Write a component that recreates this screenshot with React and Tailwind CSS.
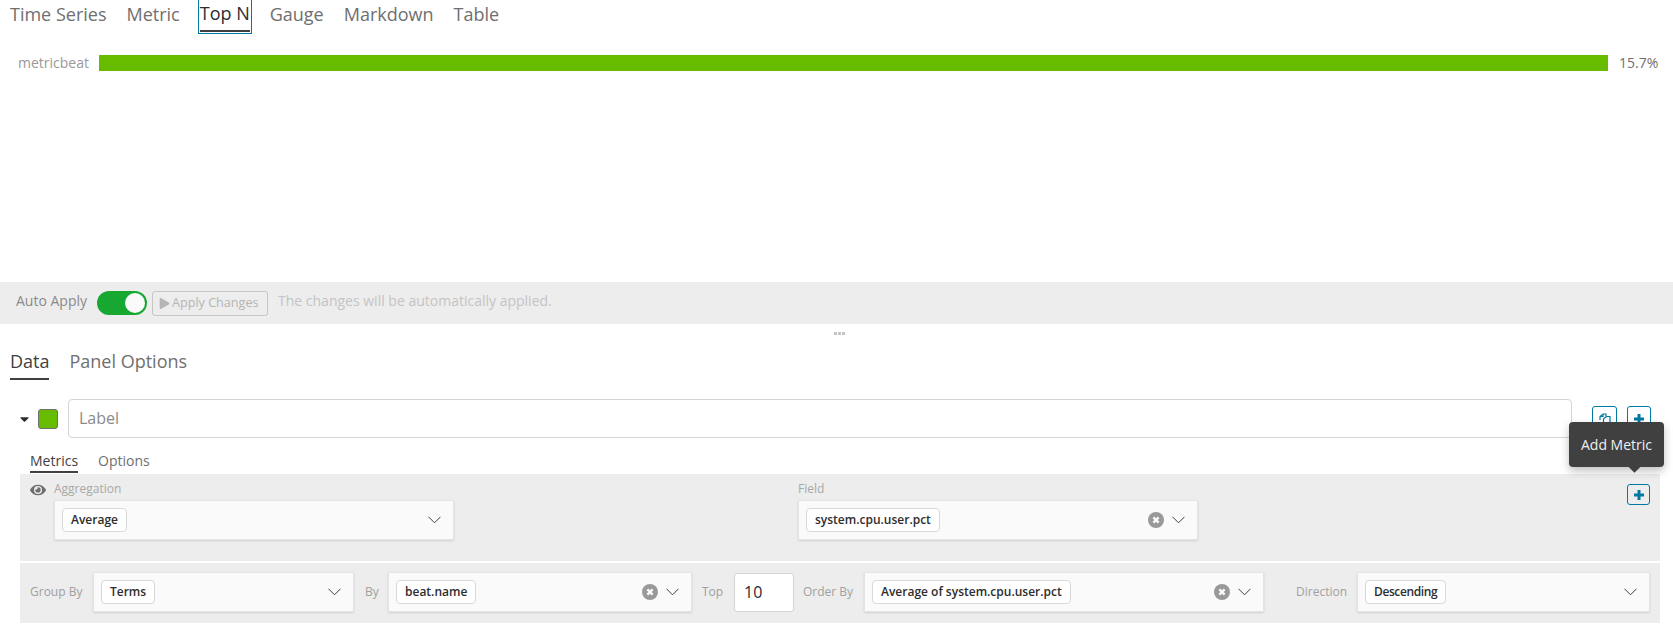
import { FaCaretDown, FaEye, FaPlay } from "react-icons/fa";

const TABS = ["Time Series", "Metric", "Top N", "Gauge", "Markdown", "Table"];

function Chevron() {
  return (
    <svg width="13" height="8" viewBox="0 0 13 8" className="shrink-0">
      <path d="M0.5 0.8 L6.5 6.8 L12.5 0.8" fill="none" stroke="#3f3f3f" strokeWidth="1" />
    </svg>
  );
}

function ClearIcon() {
  return (
    <svg width="16" height="16" viewBox="0 0 16 16" className="shrink-0">
      <circle cx="8" cy="8" r="8" fill="#999999" />
      <path d="M5.4 5.4 L10.6 10.6 M10.6 5.4 L5.4 10.6" stroke="#ffffff" strokeWidth="2.2" />
    </svg>
  );
}

function PlusIcon() {
  return (
    <svg width="10" height="10" viewBox="0 0 10 10">
      <path d="M3.5 0 H6.5 V3.5 H10 V6.5 H6.5 V10 H3.5 V6.5 H0 V3.5 H3.5 Z" fill="#0079a5" />
    </svg>
  );
}

function FilesIcon() {
  return (
    <svg width="12" height="12" viewBox="0 0 12 12" fill="none" stroke="#0079a5" strokeWidth="1.2">
      <path d="M1 7 L1 3.5 L4 1 L7 1 L7 3.5" />
      <path d="M4 1 L4 3.5 L1 3.5" />
      <path d="M4.5 11 L4.5 5.8 L7.5 3.5 L11 3.5 L11 11 Z" />
    </svg>
  );
}

function Select({ value, clearable, className, tagClassName = "" }) {
  return (
    <div
      className={`flex h-10 items-center border border-[#e4e4e4] bg-[#fafafa] pl-[7px] shadow-[0_1px_2px_rgba(0,0,0,0.12)] ${className}`}
    >
      <span
        className={`flex h-6 items-center rounded-sm border border-[#d9d9d9] bg-white px-2 text-xs font-semibold text-[#2d2d2d] ${tagClassName}`}
      >
        {value}
      </span>
      <div className="ml-auto flex items-center gap-2 pr-3">
        {clearable && <ClearIcon />}
        <Chevron />
      </div>
    </div>
  );
}

function IconButton({ children, className = "" }) {
  return (
    <button
      className={`flex h-[21px] w-[23px] items-center justify-center rounded-[3px] border border-[#0079a5] ${className}`}
    >
      {children}
    </button>
  );
}

export default function App() {
  return (
    <div
      className="relative h-[642px] w-full overflow-hidden bg-white text-[#6f6f6f]"
      style={{ fontFamily: '"Open Sans", sans-serif' }}
    >
      <nav className="flex h-[55px] items-start pl-[10px] pt-[1px] text-lg leading-[27px]">
        {TABS.map((tab) =>
          tab === "Top N" ? (
            <span
              key={tab}
              className="-ml-[2px] -mt-[9px] mr-[18px] h-[42px] border border-[#0079a5] px-[1px] pt-[7px] text-[#2d2d2d]"
            >
              <span className="block h-[32px] border-b-2 border-[#3f3f3f]">{tab}</span>
            </span>
          ) : (
            <span key={tab} className="mr-5">
              {tab}
            </span>
          )
        )}
      </nav>

      <div className="flex h-4 items-center">
        <span className="w-[99px] pl-[18px] text-sm text-[#999999]">metricbeat</span>
        <div className="h-4 w-[1509px] bg-[#68bc00]" />
        <span className="pl-[11px] text-sm text-[#6f6f6f]">15.7%</span>
      </div>

      <div className="mt-[211px] flex h-[42px] items-center bg-[#ededed] pl-4 text-sm">
        <span className="mb-1 text-[#8a8a8a]">Auto Apply</span>
        <div className="ml-[10px] flex h-6 w-[50px] items-center justify-end rounded-full bg-[#17a832] pr-[2px]">
          <div className="h-5 w-5 rounded-full bg-[#fafafa]" />
        </div>
        <button className="ml-[5px] flex h-[25px] w-[116px] items-center gap-[2px] rounded-[3px] border border-[#c6c6c6] pl-[6px] text-[12.6px] text-[#b5b5b5]">
          <FaPlay className="text-[11px]" />
          Apply Changes
        </button>
        <span className="mb-1 ml-[10px] text-[#c4c4c4]">The changes will be automatically applied.</span>
      </div>

      <div className="flex h-[18px] items-center justify-center gap-[1px] pl-[6px]">
        <span className="h-[3px] w-[3px] bg-[#c4c4c4]" />
        <span className="h-[3px] w-[3px] bg-[#c4c4c4]" />
        <span className="h-[3px] w-[3px] bg-[#c4c4c4]" />
      </div>

      <div className="flex h-[38px] items-start pl-[10px] text-lg leading-[38px]">
        <span className="h-[38px] border-b-2 border-[#3f3f3f] text-[#3f3f3f]">Data</span>
        <span className="ml-5">Panel Options</span>
      </div>

      <div className="mt-[19px] flex h-[39px] items-center pl-5">
        <FaCaretDown className="w-[9px] text-sm text-[#2d2d2d]" />
        <span className="ml-[9px] h-5 w-5 rounded-[3px] border border-[#6f6f6f] bg-[#68bc00]" />
        <div className="ml-[10px] flex h-[39px] w-[1504px] items-center rounded-[4px] border border-[#d4d4d4] pb-[2px] pl-[10px] text-base text-[#8a8a8a]">
          Label
        </div>
        <IconButton className="ml-5 h-[26px] w-[25px]">
          <FilesIcon />
        </IconButton>
        <IconButton className="ml-[10px] h-[26px] w-[24px]">
          <PlusIcon />
        </IconButton>
      </div>

      <div className="mt-[14px] flex h-[22px] items-start pl-[30px] text-sm leading-[18px]">
        <span className="h-[21px] border-b-2 border-[#3f3f3f] text-[#3f3f3f]">Metrics</span>
        <span className="ml-5">Options</span>
      </div>

      <div className="ml-5 w-[1640px]">
        <div className="flex h-[87px] items-start bg-[#ededed] px-[10px]">
          <FaEye className="mt-2 w-4 text-base text-[#6f6f6f]" />
          <div className="ml-2 mt-[6px] w-[744px]">
            <div className="h-5 text-xs leading-[18px] text-[#a8a8a8]">Aggregation</div>
            <Select value="Average" className="w-[400px]" />
          </div>
          <div className="mt-[6px]">
            <div className="h-5 text-xs leading-[18px] text-[#a8a8a8]">Field</div>
            <Select value="system.cpu.user.pct" clearable className="w-[400px]" />
          </div>
          <IconButton className="ml-auto mt-[10px]">
            <PlusIcon />
          </IconButton>
        </div>

        <div className="mt-[2px] flex h-[60px] items-center bg-[#ededed] px-[10px] pb-[2px] text-xs text-[#a0a0a0]">
          <span className="w-[63px]">Group By</span>
          <Select value="Terms" className="w-[261px]" />
          <span className="ml-[11px] w-[23px]">By</span>
          <Select value="beat.name" clearable className="w-[304px]" />
          <span className="ml-[10px] w-[32px]">Top</span>
          <div className="flex h-[39px] w-[60px] items-center rounded-[3px] border border-[#d4d4d4] bg-white pl-[9px] text-base text-[#2d2d2d]">
            10
          </div>
          <span className="ml-[9px] w-[61px]">Order By</span>
          <Select value="Average of system.cpu.user.pct" clearable className="w-[400px]" />
          <span className="ml-8 w-[61px]">Direction</span>
          <Select value="Descending" className="w-[293px]" tagClassName="tracking-[-0.4px]" />
        </div>
      </div>

      <div className="absolute left-[1569px] top-[422px] flex h-[45px] w-[95px] items-center justify-center rounded-[4px] bg-[#404040] text-sm text-[#f0f0f0] shadow-[0_4px_8px_rgba(0,0,0,0.25)]">
        Add Metric
        <span className="absolute left-[61px] top-[40px] h-[9px] w-[9px] rotate-45 bg-[#404040]" />
      </div>
    </div>
  );
}
